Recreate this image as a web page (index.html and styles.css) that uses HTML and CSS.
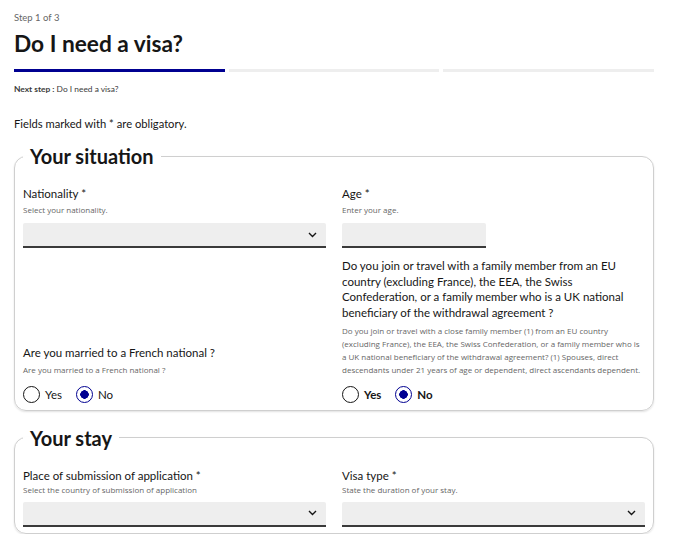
FILE: index.html
```html
<!DOCTYPE html>
<html lang="en">
<head>
<meta charset="utf-8">
<title>Do I need a visa?</title>
<link rel="stylesheet" href="styles.css">
</head>
<body>
<main class="page">
  <p class="step">Step 1 of 3</p>
  <h1 class="title">Do I need a visa?</h1>
  <div class="progress">
    <span class="seg seg-active"></span>
    <span class="seg"></span>
    <span class="seg"></span>
  </div>
  <p class="next"><b>Next step :</b> Do I need a visa?</p>
  <p class="notice">Fields marked with * are obligatory.</p>

  <fieldset class="box">
    <legend class="legend">Your situation</legend>
    <div class="grid">
      <div class="field">
        <label class="label">Nationality *</label>
        <span class="hint">Select your nationality.</span>
        <div class="select">
          <svg class="chev" width="9" height="6" viewBox="0 0 9 6"><path d="M1 1l3.5 3.5L8 1" fill="none" stroke="#161616" stroke-width="1.4"/></svg>
        </div>
      </div>
      <div class="field">
        <label class="label">Age *</label>
        <span class="hint">Enter your age.</span>
        <div class="input"></div>
      </div>
      <div class="field field-end">
        <span class="label">Are you married to a French national ?</span>
        <span class="hint hint-gap">Are you married to a French national ?</span>
        <div class="radios">
          <span class="radio"><span class="circle"></span>Yes</span>
          <span class="radio"><span class="circle checked"></span>No</span>
        </div>
      </div>
      <div class="field field-end">
        <span class="label label-long">Do you join or travel with a family member from an EU country (excluding France), the EEA, the Swiss Confederation, or a family member who is a UK national beneficiary of the withdrawal agreement ?</span>
        <span class="hint hint-long">Do you join or travel with a close family member (1) from an EU country (excluding France), the EEA, the Swiss Confederation, or a family member who is a UK national beneficiary of the withdrawal agreement? (1) Spouses, direct descendants under 21 years of age or dependent, direct ascendants dependent.</span>
        <div class="radios radios-bold">
          <span class="radio"><span class="circle"></span>Yes</span>
          <span class="radio"><span class="circle checked"></span>No</span>
        </div>
      </div>
    </div>
  </fieldset>

  <fieldset class="box box-stay">
    <legend class="legend">Your stay</legend>
    <div class="grid">
      <div class="field">
        <label class="label">Place of submission of application *</label>
        <span class="hint hint-tight">Select the country of submission of application</span>
        <div class="select select-tight">
          <svg class="chev" width="9" height="6" viewBox="0 0 9 6"><path d="M1 1l3.5 3.5L8 1" fill="none" stroke="#161616" stroke-width="1.4"/></svg>
        </div>
      </div>
      <div class="field">
        <label class="label">Visa type *</label>
        <span class="hint hint-tight">State the duration of your stay.</span>
        <div class="select select-tight">
          <svg class="chev" width="9" height="6" viewBox="0 0 9 6"><path d="M1 1l3.5 3.5L8 1" fill="none" stroke="#161616" stroke-width="1.4"/></svg>
        </div>
      </div>
    </div>
  </fieldset>
</main>
</body>
</html>
```
FILE: styles.css
```css
* { box-sizing: border-box; }
html, body { margin: 0; padding: 0; background: #fff; }
body {
  font-family: "Lato", "Liberation Sans", sans-serif;
  color: #161616;
}
.page {
  width: 640px;
  margin-left: 14px;
  padding-top: 11px;
}
.step {
  margin: 0;
  font-size: 9.5px;
  line-height: 14px;
  color: #666;
}
.title {
  margin: 5px 0 0;
  font-size: 22.7px;
  line-height: 28px;
  font-weight: 700;
}
.progress {
  display: grid;
  grid-template-columns: 1fr 1fr 1fr;
  gap: 4px;
  margin-top: 11px;
}
.seg { height: 3px; background: #eeeeee; }
.seg-active { background: #000091; }
.next {
  margin: 12px 0 0;
  font-size: 8.4px;
  line-height: 10px;
  color: #3a3a3a;
}
.next b { font-weight: 700; }
.notice {
  margin: 23px 0 0;
  font-size: 11.2px;
  line-height: 14px;
}
.box {
  margin: 13px 0 0;
  padding: 18px 8px 6px;
  border: 1px solid #cfcfcf;
  border-radius: 12px;
  box-shadow: 0 1px 2px rgba(0,0,0,0.12);
  min-width: 0;
}
.box-stay { margin-top: 15px; }
.legend {
  padding: 0 7px;
  font-size: 20px;
  line-height: 24px;
  font-weight: 700;
}
.grid {
  display: grid;
  grid-template-columns: 1fr 1fr;
  column-gap: 16px;
  row-gap: 10px;
}
.field { display: flex; flex-direction: column; align-items: flex-start; }
.field-end { justify-content: flex-end; }
.label {
  font-size: 11.5px;
  line-height: 16px;
}
.label-long { line-height: 15.7px; max-width: 296px; }
.hint {
  margin-top: 2px;
  font-family: "Open Sans", "Lato", sans-serif;
  font-size: 8px;
  line-height: 12px;
  color: #666;
}
.hint-gap { margin-top: 3px; }
.hint-long { margin-top: 3px; line-height: 13px; }
.hint-tight { margin-top: 0; }
.select, .input {
  margin-top: 7px;
  height: 25px;
  background: #eeeeee;
  border-bottom: 2px solid #3a3a3a;
  border-radius: 2px 2px 0 0;
}
.select-tight { margin-top: 6px; }
.select {
  width: 100%;
  display: flex;
  align-items: center;
  justify-content: flex-end;
  padding-right: 9px;
}
.input { width: 144px; }
.radios {
  display: flex;
  gap: 14px;
  margin-top: 10px;
}
.radio {
  display: flex;
  align-items: center;
  gap: 5px;
  font-size: 11.5px;
  line-height: 18px;
}
.radios-bold .radio { font-weight: 700; }
.circle {
  width: 17px;
  height: 17px;
  border-radius: 50%;
  border: 1px solid #161616;
  background: #fff;
}
.circle.checked {
  border-color: #000091;
  background: radial-gradient(circle, #000091 0 4px, #fff 4.5px);
}
```
